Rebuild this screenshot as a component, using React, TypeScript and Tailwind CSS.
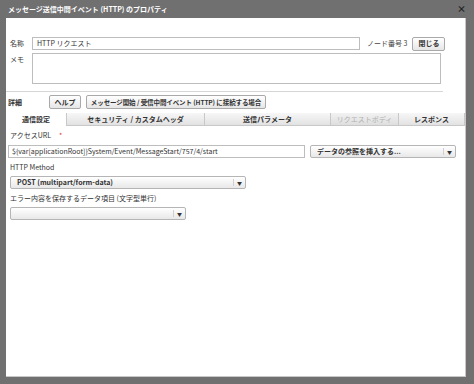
const font = { fontFamily: '"Noto Sans CJK JP", "Liberation Sans", sans-serif' };

function Btn({ children, className = "" }: { children: React.ReactNode; className?: string }) {
	return (
		<button
			className={
				"h-[14px] whitespace-nowrap flex items-center justify-center border border-[#a9a9a9] rounded-[2px] bg-gradient-to-b from-white to-[#e6e6e6] font-bold text-[#333] leading-none px-0 " +
				className
			}
		>
			{children}
		</button>
	);
}

function Select({ label, className = "" }: { label: string; className?: string }) {
	return (
		<div
			className={
				"h-[13px] flex items-stretch border border-[#b5b5b5] rounded-[2px] bg-gradient-to-b from-white to-[#e8e8e8] " +
				className
			}
		>
			<div className="flex-1 flex items-center px-[6px] text-[7px] font-bold text-[#333] leading-none whitespace-nowrap">{label}</div>
			<div className="w-[12px] border-l border-[#d0d0d0] my-[2px] flex items-center justify-center">
				<span className="text-[5px] text-[#333] leading-none">▼</span>
			</div>
		</div>
	);
}

export default function App() {
	const tabs = [
		{ t: "通信設定", w: "w-[61px]", active: true },
		{ t: "セキュリティ / カスタムヘッダ", w: "w-[138px]" },
		{ t: "送信パラメータ", w: "w-[126px]" },
		{ t: "リクエストボディ", w: "w-[68px]", disabled: true },
		{ t: "レスポンス", w: "flex-1" },
	];
	return (
		<div className="w-[474px] h-[384px] bg-[#707070] flex flex-col" style={font}>
			<div className="h-[18px] flex items-center justify-between pl-[8px] pr-[8px]">
				<span className="text-white text-[7px] font-bold leading-none">メッセージ送信中間イベント (HTTP) のプロパティ</span>
				<span className="text-[#222] text-[9px] font-bold leading-none -mt-[2px]">×</span>
			</div>
			<div className="ml-[6px] mr-[8px] mb-[7px] flex-1 bg-white border-r border-b border-[#c8c8c8] flex flex-col text-[#333]">
				<div className="mt-[19px] flex items-center h-[13px]">
					<span className="w-[26px] pl-[4px] text-[7px] leading-none">名称</span>
					<div className="w-[328px] h-[13px] border border-[#bdbdbd] flex items-center px-[4px] text-[7px] leading-none">
						HTTP リクエスト
					</div>
					<span className="ml-[7px] text-[7px] leading-none text-[#444] whitespace-nowrap">ノード番号 3</span>
					<Btn className="ml-[5px] h-[13px] w-[33px] text-[7px]">閉じる</Btn>
				</div>
				<div className="mt-[3px] flex">
					<span className="w-[26px] pl-[4px] pt-[3px] text-[7px] leading-none">メモ</span>
					<div className="w-[409px] h-[31px] border border-[#bdbdbd]" />
				</div>
				<div className="mt-[7px] w-[437px] h-px bg-[#d6d6d6]" />
				<div className="mt-[3px] flex items-center">
					<span className="w-[43px] pl-[2px] text-[7px] font-bold leading-none">詳細</span>
					<Btn className="w-[32px] text-[7px]">ヘルプ</Btn>
					<Btn className="ml-[5px] w-[180px] text-[6.5px] tracking-[-0.1px]">メッセージ開始 / 受信中間イベント (HTTP) に接続する場合</Btn>
				</div>
				<div className="mt-[4px] flex h-[13px]">
					{tabs.map((tab, i) => (
						<div
							key={i}
							className={
								tab.w +
								" flex items-center justify-center text-[7px] font-bold leading-none whitespace-nowrap border-r border-[#c8c8c8] " +
								(tab.active
									? "bg-white"
									: tab.disabled
										? "border-b bg-gradient-to-b from-[#f2f2f2] to-[#dedede] text-[#b0b0b0] font-normal"
										: "border-b bg-gradient-to-b from-[#f7f7f7] to-[#e2e2e2]")
							}
						>
							{tab.t}
						</div>
					))}
				</div>
				<div className="mt-[6px] flex items-center pl-[4px] text-[7px] leading-none">
					<span>アクセスURL</span>
					<span className="ml-[8px] text-[#e03030]">*</span>
				</div>
				<div className="mt-[6px] flex items-center pl-[2px]">
					<div className="w-[297px] h-[13px] border border-[#bdbdbd] flex items-center px-[3px] text-[7px] leading-none whitespace-nowrap">
						{"${var[applicationRoot]}System/Event/MessageStart/757/4/start"}
					</div>
					<Select label="データの参照を挿入する..." className="ml-[5px] w-[146px]" />
				</div>
				<div className="mt-[6px] pl-[4px] text-[7px] leading-none">HTTP Method</div>
				<Select label="POST (multipart/form-data)" className="mt-[5px] ml-[4px] w-[236px]" />
				<div className="mt-[6px] pl-[4px] text-[7px] leading-none">エラー内容を保存するデータ項目 (文字型単行)</div>
				<Select label="" className="mt-[5px] ml-[4px] w-[176px]" />
			</div>
		</div>
	);
}
